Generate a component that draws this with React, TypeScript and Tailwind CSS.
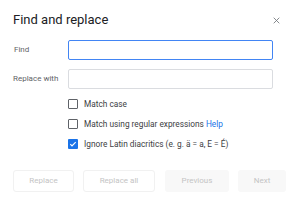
import React from 'react';

const Box = ({ checked = false }: { checked?: boolean }) =>
  checked ? (
    <span className="w-[10px] h-[10px] rounded-[1px] bg-[#1a73e8] flex items-center justify-center">
      <svg width="8" height="8" viewBox="0 0 24 24" fill="none" stroke="white" strokeWidth="3.5">
        <path d="M4 12.5l5 5L20 6.5" />
      </svg>
    </span>
  ) : (
    <span className="w-[10px] h-[10px] rounded-[1px] border-[1.5px] border-[#5f6368]" />
  );

export default function App() {
  return (
    <div className="w-[300px] h-[203px] bg-white font-['Roboto',sans-serif] text-[#3c4043] relative">
      <div className="flex items-center justify-between pl-[13px] pr-[20px] pt-[10px]">
        <h1 className="text-[13px] text-[#202124] leading-[20px] font-normal">Find and replace</h1>
        <svg width="7" height="7" viewBox="0 0 10 10" stroke="#70757a" strokeWidth="1.2" className="mt-[1px]">
          <path d="M1 1l8 8M9 1l-8 8" />
        </svg>
      </div>

      <div className="flex flex-col mt-[10px]">
        <div className="flex items-center h-[20px]">
          <span className="w-[68px] pl-[14px] text-[8px] text-[#5f6368]">Find</span>
          <div className="w-[205px] h-[20px] rounded-[2px] border border-[#4285f4]" />
        </div>
        <div className="flex items-center h-[20px] mt-[9px]">
          <span className="w-[68px] pl-[13px] text-[8px] text-[#5f6368]">Replace with</span>
          <div className="w-[205px] h-[20px] rounded-[2px] border border-[#dadce0]" />
        </div>

        <div className="flex flex-col gap-[10px] mt-[10px] pl-[68px] text-[8.3px]">
          <label className="flex items-center gap-[6px] h-[10px]">
            <Box />
            <span>Match case</span>
          </label>
          <label className="flex items-center gap-[6px] h-[10px]">
            <Box />
            <span>
              Match using regular expressions <span className="text-[#1a73e8]">Help</span>
            </span>
          </label>
          <label className="flex items-center gap-[6px] h-[10px]">
            <Box checked />
            <span>Ignore Latin diacritics (e. g. ä = a, E = É)</span>
          </label>
        </div>

        <div className="flex items-center mt-[21px] pl-[13px] text-[8px] text-[#c4c4c4]">
          <div className="w-[61px] h-[22px] rounded-[3px] border border-[#f1f1f1] flex items-center justify-center">Replace</div>
          <div className="w-[72px] h-[22px] ml-[9px] rounded-[3px] border border-[#f1f1f1] flex items-center justify-center">Replace all</div>
          <div className="w-[64px] h-[22px] ml-[10px] rounded-[3px] bg-[#f8f8f8] flex items-center justify-center">Previous</div>
          <div className="w-[48px] h-[22px] ml-[9px] rounded-[3px] bg-[#f8f8f8] flex items-center justify-center">Next</div>
        </div>
      </div>
    </div>
  );
}
